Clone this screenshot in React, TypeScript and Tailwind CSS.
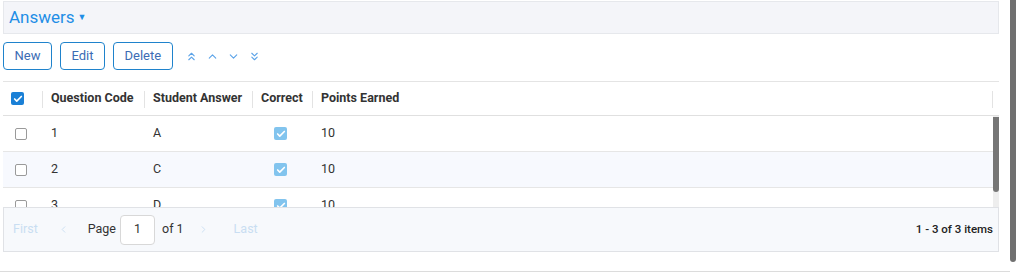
import { ChevronsUp, ChevronUp, ChevronDown, ChevronsDown, Check, ChevronLeft, ChevronRight } from "lucide-react";

const rows = [
  { code: "1", answer: "A", points: "10" },
  { code: "2", answer: "C", points: "10" },
  { code: "3", answer: "D", points: "10" },
];

function HeadCell({ label, w }: { label: string; w: string }) {
  return (
    <div className={`${w} flex items-center relative pl-[8px] font-bold`}>
      {label}
      <span className="absolute right-0 top-[9px] h-[17px] w-px bg-[#e3e3e3]" />
    </div>
  );
}

export default function App() {
  return (
    <div className="w-[1027px] h-[273px] bg-white flex text-[12.5px] text-[#333]" style={{ fontFamily: "Roboto, 'Liberation Sans', sans-serif" }}>
      <div className="w-[1010px] h-[272px] border-b border-[#dcdcdc] flex">
        <div className="flex flex-col pl-[3px] pt-[1px] w-[1002px]">
          {/* title bar */}
          <div className="w-[996px] h-[33px] bg-[#f4f5f9] border border-[#e6e8ec] flex items-center pl-[5px]">
            <span className="text-[17px] text-[#1f8ee6]">Answers</span>
            <span className="text-[9px] text-[#1f8ee6] ml-[3px] mt-[1px]">▼</span>
          </div>

          {/* toolbar */}
          <div className="flex items-center h-[28px] mt-[8px] gap-[8px]">
            {["New", "Edit", "Delete"].map((b) => (
              <button key={b} className="h-[28px] px-[10.5px] border border-[#1f83cc] rounded-[4px] text-[13px] text-[#3c6cb4] bg-white">
                {b}
              </button>
            ))}
            <div className="flex items-center gap-[8px] ml-[4px] text-[#5ba3e8]">
              <ChevronsUp size={13} strokeWidth={2} />
              <ChevronUp size={13} strokeWidth={2} />
              <ChevronDown size={13} strokeWidth={2} />
              <ChevronsDown size={13} strokeWidth={2} />
            </div>
          </div>

          {/* grid */}
          <div className="mt-[11px] w-[996px] border-t border-[#e4e4e4]">
            <div className="h-[34px] flex border-b border-[#e0e0e0] bg-white">
              <div className="w-[40px] flex items-center relative">
                <span className="ml-[8px] w-[13px] h-[13px] rounded-[2px] bg-[#1a80d6] flex items-center justify-center">
                  <Check size={10} strokeWidth={4} color="white" />
                </span>
                <span className="absolute right-0 top-[9px] h-[17px] w-px bg-[#e3e3e3]" />
              </div>
              <HeadCell label="Question Code" w="w-[102px]" />
              <HeadCell label="Student Answer" w="w-[108px]" />
              <HeadCell label="Correct" w="w-[60px]" />
              <div className="flex-1 flex items-center relative pl-[8px] font-bold">
                Points Earned
                <span className="absolute right-[6px] top-[9px] h-[17px] w-px bg-[#e3e3e3]" />
              </div>
            </div>

            <div className="h-[91px] overflow-hidden flex">
              <div className="flex-1">
                {rows.map((r, i) => (
                  <div key={r.code} className={`h-[36px] flex items-center border-b border-[#e6e6e6] ${i === 1 ? "bg-[#f7f9fe]" : "bg-white"}`}>
                    <div className="w-[40px] flex">
                      <span className="ml-[12px] w-[12px] h-[12px] border border-[#9a9a9a] rounded-[2px] bg-white" />
                    </div>
                    <div className="w-[102px] pl-[8px]">{r.code}</div>
                    <div className="w-[108px] pl-[8px]">{r.answer}</div>
                    <div className="w-[60px] flex pl-[21px]">
                      <span className="w-[13px] h-[13px] rounded-[2px] bg-[#82c4ee] flex items-center justify-center">
                        <Check size={10} strokeWidth={4} color="white" />
                      </span>
                    </div>
                    <div className="pl-[8px]">{r.points}</div>
                  </div>
                ))}
              </div>
              <div className="w-[6px] bg-[#eeeeee]">
                <div className="w-[6px] h-[75px] mt-[1px] rounded-b-[3px] bg-[#767676]" />
              </div>
            </div>

            {/* pager */}
            <div className="h-[45px] bg-[#f7f9fc] border border-[#e0e2e6] flex items-center pl-[9px] pr-[5px]">
              <span className="text-[#c9def2]">First</span>
              <ChevronLeft size={11} className="ml-[20px] text-[#c9def2]" />
              <span className="ml-[19px]">Page</span>
              <span className="ml-[4px] w-[35px] h-[30px] bg-white border border-[#d8d8d8] rounded-[4px] flex items-center justify-center">1</span>
              <span className="ml-[7px]">of 1</span>
              <ChevronRight size={11} className="ml-[14px] text-[#c9def2]" />
              <span className="ml-[25px] text-[#c9def2]">Last</span>
              <span className="ml-auto font-medium text-[11.5px] text-[#222]">1 - 3 of 3 items</span>
            </div>
          </div>
        </div>
      </div>
      <div className="w-[6px] h-[262px] bg-[#707070] rounded-b-[3px]" />
    </div>
  );
}
